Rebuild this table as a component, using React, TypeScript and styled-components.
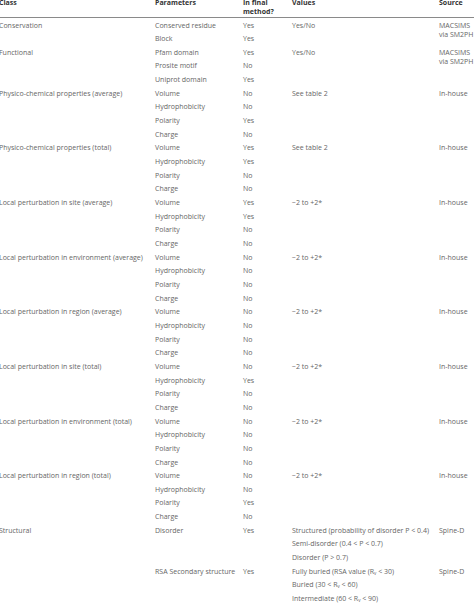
import React from "react";
import styled, { createGlobalStyle } from "styled-components";

const Global = createGlobalStyle`
  html, body { margin: 0; padding: 0; background: #fff; }
  body { width: 474px; height: 607px; overflow: hidden; }
`;

const Page = styled.div`
  width: 474px;
  height: 607px;
  overflow: hidden;
  font-family: "Open Sans", "Noto Sans", sans-serif;
  font-size: 7px;
  color: #666;
`;

const Table = styled.table`
  border-collapse: collapse;
  table-layout: fixed;
  width: 500px;
  margin: -2px 0 0 -1px;
`;

const HeadCell = styled.th<{ $w: number }>`
  width: ${(p) => p.$w}px;
  text-align: left;
  vertical-align: top;
  font-weight: 700;
  color: #333;
  line-height: 9px;
  padding: 0 0 1px 0;
  height: 18px;
  border-bottom: 1.3px solid #8a8a8a;
  white-space: nowrap;
`;

const Row = styled.tr`
  height: 13.67px;
`;

const Cell = styled.td`
  padding: 0;
  vertical-align: top;
  white-space: nowrap;
`;

const CellBox = styled.div`
  height: 13.67px;
  padding-top: 2.5px;
  box-sizing: border-box;
  line-height: 9px;
  overflow: visible;
`;

const SourceText = styled.div`
  line-height: 9px;
  white-space: nowrap;
`;

const Sub = styled.sub`
  font-size: 4.5px;
  vertical-align: -1px;
  line-height: 0;
`;

type R = { cls?: string; param: string; fin: string; val?: React.ReactNode; src?: string[] };

const props4 = (cls: string, fins: string[], val: string): R[] => [
  { cls, param: "Volume", fin: fins[0], val, src: ["In-house"] },
  { param: "Hydrophobicity", fin: fins[1] },
  { param: "Polarity", fin: fins[2] },
  { param: "Charge", fin: fins[3] },
];

const rows: R[] = [
  { cls: "Conservation", param: "Conserved residue", fin: "Yes", val: "Yes/No", src: ["MACSIMS", "via SM2PH"] },
  { param: "Block", fin: "Yes" },
  { cls: "Functional", param: "Pfam domain", fin: "Yes", val: "Yes/No", src: ["MACSIMS", "via SM2PH"] },
  { param: "Prosite motif", fin: "No" },
  { param: "Uniprot domain", fin: "Yes" },
  ...props4("Physico-chemical properties (average)", ["No", "No", "Yes", "No"], "See table 2"),
  ...props4("Physico-chemical properties (total)", ["Yes", "Yes", "No", "No"], "See table 2"),
  ...props4("Local perturbation in site (average)", ["Yes", "Yes", "No", "No"], "\u22122 to +2*"),
  ...props4("Local perturbation in environment (average)", ["No", "No", "No", "No"], "\u22122 to +2*"),
  ...props4("Local perturbation in region (average)", ["No", "No", "No", "No"], "\u22122 to +2*"),
  ...props4("Local perturbation in site (total)", ["No", "Yes", "No", "No"], "\u22122 to +2*"),
  ...props4("Local perturbation in environment (total)", ["No", "No", "No", "No"], "\u22122 to +2*"),
  ...props4("Local perturbation in region (total)", ["No", "No", "Yes", "No"], "\u22122 to +2*"),
  { cls: "Structural", param: "Disorder", fin: "Yes", val: "Structured (probability of disorder P < 0.4)", src: ["Spine-D"] },
  { param: "", fin: "", val: "Semi-disorder (0.4 < P < 0.7)" },
  { param: "", fin: "", val: "Disorder (P > 0.7)" },
  {
    param: "RSA Secondary structure",
    fin: "Yes",
    val: (
      <>
        Fully buried (RSA value (R<Sub>v</Sub> &lt; 30)
      </>
    ),
    src: ["Spine-D"],
  },
  { param: "", fin: "", val: <>Buried (30 &lt; R<Sub>v</Sub> &lt; 60)</> },
  { param: "", fin: "", val: <>Intermediate (60 &lt; R<Sub>v</Sub> &lt; 90)</> },
];

export default function App() {
  return (
    <Page>
      <Global />
      <Table>
        <thead>
          <tr>
            <HeadCell $w={156}>Class</HeadCell>
            <HeadCell $w={88}>Parameters</HeadCell>
            <HeadCell $w={49}>
              In final
              <br />
              method?
            </HeadCell>
            <HeadCell $w={147}>Values</HeadCell>
            <HeadCell $w={60}>Source</HeadCell>
          </tr>
        </thead>
        <tbody>
          {rows.map((r, i) => (
            <Row key={i}>
              <Cell><CellBox>{r.cls}</CellBox></Cell>
              <Cell><CellBox>{r.param}</CellBox></Cell>
              <Cell><CellBox>{r.fin}</CellBox></Cell>
              <Cell><CellBox>{r.val}</CellBox></Cell>
              <Cell>
                <CellBox>
                  {r.src?.map((s) => (
                    <SourceText key={s}>{s}</SourceText>
                  ))}
                </CellBox>
              </Cell>
            </Row>
          ))}
        </tbody>
      </Table>
    </Page>
  );
}
